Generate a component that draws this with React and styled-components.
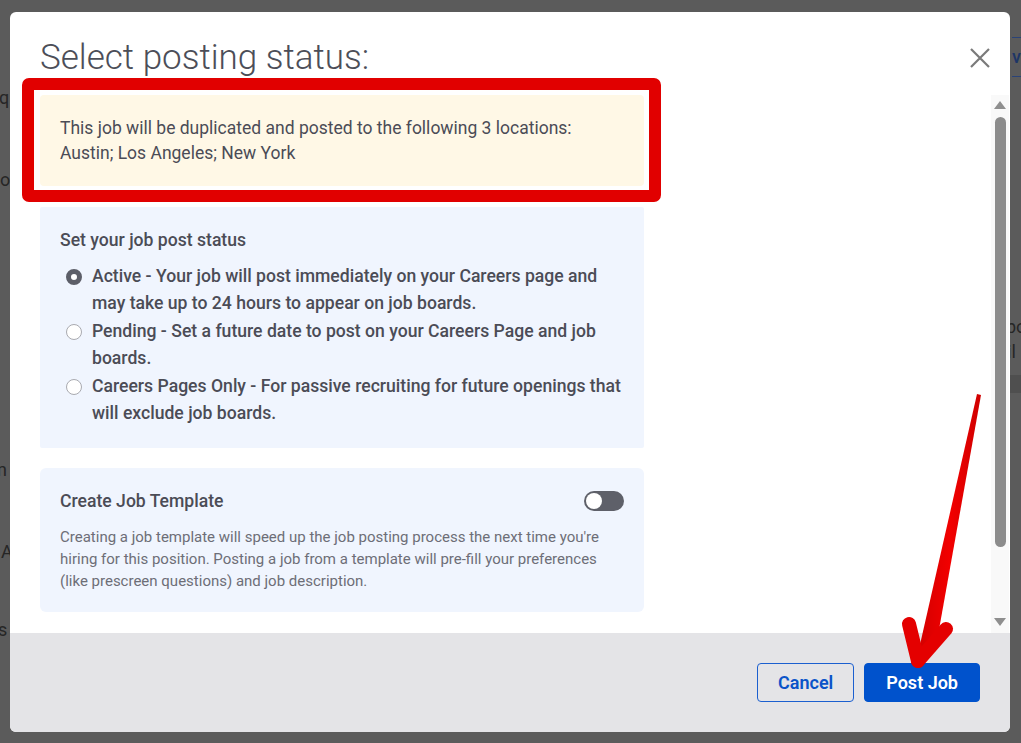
import styled, { createGlobalStyle } from "styled-components";

const GlobalStyle = createGlobalStyle`
  html, body {
    margin: 0;
    padding: 0;
    background: #5b5b5b;
  }
  body {
    font-family: Roboto, "Liberation Sans", sans-serif;
  }
  * {
    box-sizing: border-box;
  }
`;

const Screen = styled.div`
  position: relative;
  display: flex;
  width: 1021px;
  height: 743px;
  overflow: hidden;
  background: #5b5b5b;
`;

/* the page behind the overlay, only its edges peek out */
const Strip = styled.div`
  display: flex;
  flex-direction: column;
  width: ${(p) => p.$width}px;
  flex-shrink: 0;
  overflow: hidden;
`;

const PeekText = styled.div`
  margin-top: ${(p) => p.$top}px;
  height: 24px;
  line-height: 24px;
  font-size: 18px;
  color: ${(p) => p.$color || "#262626"};
  white-space: nowrap;
  margin-left: ${(p) => p.$shift || 0}px;
`;

const PeekButton = styled.div`
  margin-top: 37px;
  height: 40px;
  line-height: 38px;
  border-top: 1px solid #2a4378;
  border-bottom: 1px solid #2a4378;
  font-size: 18px;
  font-weight: 500;
  color: #1d3566;
  margin-left: 2px;
`;

const PeekBand = styled.div`
  margin-top: ${(p) => p.$top}px;
  height: ${(p) => p.$height}px;
  background: #4f4f4f;
`;

const Modal = styled.div`
  position: relative;
  width: 1000px;
  margin: 12px 0 11px;
  display: flex;
  flex-direction: column;
  background: #fff;
  border-radius: 6px;
  overflow: hidden;
  flex-shrink: 0;
`;

const Header = styled.div`
  height: 83px;
  display: flex;
  justify-content: space-between;
  align-items: flex-start;
  padding: 0 20px 0 30px;
`;

const Title = styled.h2`
  margin: 26px 0 0;
  font-size: 35px;
  line-height: 40px;
  font-weight: 300;
  color: #4c4e58;
`;

const CloseButton = styled.button`
  margin-top: 36px;
  width: 20px;
  height: 20px;
  padding: 0;
  border: none;
  background: none;
  cursor: pointer;
  & svg {
    display: block;
  }
`;

const Body = styled.div`
  flex: 1;
  min-height: 0;
  display: flex;
`;

const Content = styled.div`
  flex: 1;
  overflow: hidden;
  padding-left: 30px;
  display: flex;
  flex-direction: column;
  gap: 20px;
`;

const Alert = styled.div`
  width: 604px;
  flex-shrink: 0;
  padding: 21px 20px 20px;
  background: #fff8e6;
  border-radius: 4px;
  font-size: 17.5px;
  line-height: 25px;
  color: #4b4c56;
`;

const Panel = styled.div`
  width: 604px;
  flex-shrink: 0;
  padding: 22px ${(p) => p.$padRight}px ${(p) => p.$padBottom}px 20px;
  background: #f0f5fe;
  border-radius: ${(p) => p.$radius}px;
  margin-top: ${(p) => p.$offset || 0}px;
`;

const PanelHeading = styled.div`
  display: flex;
  justify-content: space-between;
  align-items: center;
  height: 22px;
  font-size: 17.6px;
  font-weight: 500;
  color: #4b4c56;
`;

const RadioList = styled.div`
  margin-top: 12px;
  display: flex;
  flex-direction: column;
  gap: 1px;
`;

const RadioRow = styled.label`
  display: flex;
  align-items: flex-start;
  font-size: 17.6px;
  font-weight: 500;
  line-height: 27px;
  color: #4b4c56;
`;

const RadioDot = styled.span`
  flex-shrink: 0;
  width: 16px;
  height: 16px;
  margin: 6px 10px 0 6px;
  border-radius: 50%;
  background: #fff;
  border: ${(p) => (p.$checked ? "5px solid #5c5e68" : "1.5px solid #a9aab0")};
`;

const Toggle = styled.span`
  display: flex;
  align-items: center;
  width: 40px;
  height: 20px;
  padding: 2px;
  border-radius: 10px;
  background: #5e6069;
  &::after {
    content: "";
    width: 16px;
    height: 16px;
    border-radius: 50%;
    background: #fff;
  }
`;

const Description = styled.p`
  margin: 14px 0 0;
  font-size: 15px;
  line-height: 22px;
  color: #6d6e77;
`;

const Scrollbar = styled.div`
  width: 18px;
  margin-right: 1px;
  flex-shrink: 0;
  display: flex;
  flex-direction: column;
  align-items: center;
  background: #f9f9f9;
`;

const ScrollArrow = styled.span`
  width: 0;
  height: 0;
  border-left: 6px solid transparent;
  border-right: 6px solid transparent;
  ${(p) =>
    p.$down
      ? "border-top: 8px solid #8f8f8f; margin-top: auto; margin-bottom: 7px;"
      : "border-bottom: 8px solid #8f8f8f; margin-top: 6px;"}
`;

const Thumb = styled.span`
  margin-top: 8px;
  width: 11px;
  height: 430px;
  border-radius: 6px;
  background: #8c8c8c;
`;

const Footer = styled.div`
  height: 99px;
  flex-shrink: 0;
  display: flex;
  justify-content: flex-end;
  align-items: center;
  gap: 10px;
  padding-right: 30px;
  background: #e4e4e7;
`;

const Button = styled.button`
  height: 39px;
  padding: 0 ${(p) => (p.$primary ? 21 : 20)}px;
  border-radius: 4px;
  border: 1px solid ${(p) => (p.$primary ? "#0052cc" : "#1b5fcf")};
  background: ${(p) => (p.$primary ? "#0052cc" : "transparent")};
  color: ${(p) => (p.$primary ? "#fff" : "#0b54c9")};
  font-family: Roboto, "Liberation Sans", sans-serif;
  font-size: 18px;
  font-weight: 600;
  cursor: pointer;
`;

/* annotation drawn over the screenshot */
const Highlight = styled.div`
  position: absolute;
  left: 12px;
  top: 66px;
  width: 639px;
  height: 124px;
  border: 12px solid #e10000;
  border-radius: 7px;
  pointer-events: none;
`;

const ArrowLayer = styled.svg`
  position: absolute;
  inset: 0;
  pointer-events: none;
`;

const statuses = [
  {
    label:
      "Active - Your job will post immediately on your Careers page and may take up to 24 hours to appear on job boards.",
    checked: true,
  },
  {
    label:
      "Pending - Set a future date to post on your Careers Page and job boards.",
  },
  {
    label:
      "Careers Pages Only - For passive recruiting for future openings that will exclude job boards.",
  },
];

export default function App() {
  return (
    <>
      <GlobalStyle />
      <Screen>
        <Strip $width={10}>
          <PeekText $top={86} $shift={-1}>
            q
          </PeekText>
          <PeekText $top={58}>o</PeekText>
          <PeekText $top={266} $shift={-3}>
            n
          </PeekText>
          <PeekText $top={58} $shift={1}>
            A
          </PeekText>
          <PeekText $top={54} $shift={-2}>
            s
          </PeekText>
        </Strip>

        <Modal>
          <Header>
            <Title>Select posting status:</Title>
            <CloseButton aria-label="Close">
              <svg width="20" height="20" viewBox="0 0 20 20">
                <path
                  d="M1 1 L19 19 M19 1 L1 19"
                  stroke="#7a7a7a"
                  strokeWidth="2.2"
                  fill="none"
                />
              </svg>
            </CloseButton>
          </Header>

          <Body>
            <Content>
              <Alert>
                This job will be duplicated and posted to the following 3
                locations:
                <br />
                Austin; Los Angeles; New York
              </Alert>

              <Panel $padRight={12} $padBottom={21} $radius={2} $offset={1}>
                <PanelHeading>Set your job post status</PanelHeading>
                <RadioList>
                  {statuses.map((s, i) => (
                    <RadioRow key={i}>
                      <RadioDot $checked={s.checked} />
                      <span>{s.label}</span>
                    </RadioRow>
                  ))}
                </RadioList>
              </Panel>

              <Panel $padRight={20} $padBottom={20} $radius={6}>
                <PanelHeading>
                  Create Job Template
                  <Toggle />
                </PanelHeading>
                <Description>
                  Creating a job template will speed up the job posting process
                  the next time you're hiring for this position. Posting a job
                  from a template will pre-fill your preferences (like prescreen
                  questions) and job description.
                </Description>
              </Panel>
            </Content>

            <Scrollbar>
              <ScrollArrow />
              <Thumb />
              <ScrollArrow $down />
            </Scrollbar>
          </Body>

          <Footer>
            <Button>Cancel</Button>
            <Button $primary>Post Job</Button>
          </Footer>

          <Highlight />
        </Modal>

        <Strip $width={11}>
          <PeekButton>vi</PeekButton>
          <PeekText $top={238} $shift={-4}>
            bo
          </PeekText>
          <PeekText $top={1} $shift={-3}>
            il
          </PeekText>
          <PeekBand $top={11} $height={18} />
        </Strip>

        <ArrowLayer width="1021" height="743" viewBox="0 0 1021 743">
          <defs>
            <linearGradient id="arrowShade" x1="0" y1="0" x2="1" y2="0">
              <stop offset="0" stopColor="#d40000" />
              <stop offset="0.5" stopColor="#f20000" />
              <stop offset="1" stopColor="#cf0000" />
            </linearGradient>
          </defs>
          <polygon
            points="977,394 981,395 935,652 919,649"
            fill="url(#arrowShade)"
          />
          <line
            x1="909"
            y1="624"
            x2="918"
            y2="661"
            stroke="#e40000"
            strokeWidth="14"
            strokeLinecap="round"
          />
          <line
            x1="946"
            y1="629"
            x2="918"
            y2="661"
            stroke="#e40000"
            strokeWidth="14"
            strokeLinecap="round"
          />
        </ArrowLayer>
      </Screen>
    </>
  );
}
